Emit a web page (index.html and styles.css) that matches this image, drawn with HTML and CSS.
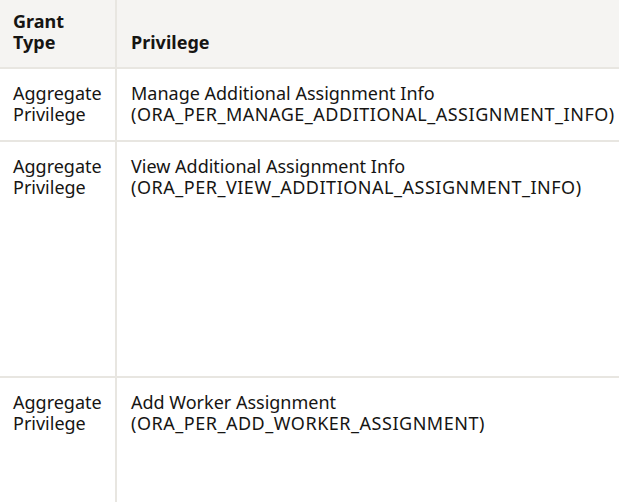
FILE: index.html
```html
<!DOCTYPE html>
<html>
<head>
<meta charset="utf-8">
<link rel="stylesheet" href="styles.css">
</head>
<body>
<table class="grants">
  <thead>
    <tr>
      <th class="col-type">Grant<br>Type</th>
      <th class="col-priv">Privilege</th>
    </tr>
  </thead>
  <tbody>
    <tr class="row-1">
      <td class="col-type">Aggregate<br>Privilege</td>
      <td class="col-priv">Manage Additional Assignment Info<br><span class="code">(ORA_PER_MANAGE_ADDITIONAL_ASSIGNMENT_INFO)</span></td>
    </tr>
    <tr class="row-2">
      <td class="col-type">Aggregate<br>Privilege</td>
      <td class="col-priv">View Additional Assignment Info<br><span class="code">(ORA_PER_VIEW_ADDITIONAL_ASSIGNMENT_INFO)</span></td>
    </tr>
    <tr class="row-3">
      <td class="col-type">Aggregate<br>Privilege</td>
      <td class="col-priv">Add Worker Assignment<br><span class="code">(ORA_PER_ADD_WORKER_ASSIGNMENT)</span></td>
    </tr>
  </tbody>
</table>
</body>
</html>
```
FILE: styles.css
```css
html, body {
  margin: 0;
  padding: 0;
  background: #ffffff;
}
body {
  font-family: "Noto Sans", sans-serif;
  font-size: 18px;
  line-height: 21px;
  color: #161513;
}
.grants {
  border-collapse: separate;
  border-spacing: 0;
  width: 619px;
  table-layout: fixed;
}
.grants th,
.grants td {
  text-align: left;
  vertical-align: top;
  padding: 14px 12px 14px 13px;
  border-bottom: 2px solid #e8e6e1;
  white-space: nowrap;
}
.grants th {
  font-weight: bold;
  background: #f5f4f2;
  vertical-align: bottom;
  padding-top: 11px;
  padding-bottom: 14px;
}
.grants .col-type {
  width: 90px;
  border-right: 2px solid #e8e6e1;
}
.grants .col-priv {
  padding-left: 14px;
}
.code {
  letter-spacing: 0.52px;
}
.row-1 td { height: 43px; }
.row-2 td { height: 206px; }
.row-3 td { height: 206px; }
```
